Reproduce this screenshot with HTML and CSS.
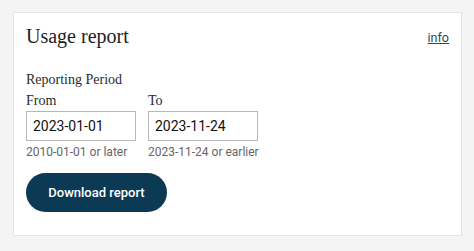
FILE: index.html
```html
<!DOCTYPE html>
<html lang="en">
<head>
  <meta charset="UTF-8" />
  <meta name="viewport" content="width=device-width, initial-scale=1.0"/>
  <title>Usage report</title>
  <link rel="stylesheet" href="styles.css">
</head>
<body>
  <div class="card">
    <div class="card-head">
      <h2 class="title">Usage report</h2>
      <a class="info" href="#">info</a>
    </div>

    <div class="period">Reporting Period</div>
    <div class="fields">
      <div class="field">
        <label class="label" for="from">From</label>
        <input id="from" class="date" type="text" value="2023-01-01">
        <div class="hint">2010-01-01 or later</div>
      </div>
      <div class="field">
        <label class="label" for="to">To</label>
        <input id="to" class="date" type="text" value="2023-11-24">
        <div class="hint">2023-11-24 or earlier</div>
      </div>
    </div>

    <button class="btn">Download report</button>
  </div>
</body>
</html>
```

FILE: styles.css
```css
* {
  box-sizing: border-box;
}

body {
  margin: 0;
  height: 251px;
  padding: 12px 12px 15px 13px;
  background: #f4f4f4;
  font-family: Roboto, 'Open Sans', sans-serif;
  color: #222;
}

.card {
  height: 224px;
  background: #fff;
  border: 1px solid #e4e4e4;
  padding: 11px 12px 0 12px;
}

.card-head {
  display: flex;
  justify-content: space-between;
  align-items: flex-start;
}

.title {
  margin: 0;
  font-family: 'Liberation Serif', serif;
  font-weight: normal;
  font-size: 20px;
  line-height: 24px;
  color: #1e1e1e;
}

.info {
  margin: 6px 0 0 0;
  font-size: 12.5px;
  color: #1d4a6e;
  text-decoration: underline;
}

.period {
  margin-top: 22px;
  font-family: 'Liberation Serif', serif;
  font-size: 14px;
  line-height: 20px;
  color: #2a2a2a;
}

.fields {
  display: flex;
  gap: 12px;
  margin-top: 2px;
}

.field {
  width: 110px;
}

.label {
  display: block;
  font-family: 'Liberation Serif', serif;
  font-size: 14px;
  line-height: 18px;
  color: #2a2a2a;
}

.date {
  display: block;
  width: 110px;
  height: 30px;
  margin-top: 1px;
  padding: 0 6px;
  border: 1px solid #b8b8b8;
  font-family: Roboto, sans-serif;
  font-size: 14px;
  color: #111;
}

.hint {
  margin-top: 3px;
  font-size: 12px;
  line-height: 16px;
  color: #666;
  white-space: nowrap;
}

.btn {
  margin-top: 13px;
  width: 141px;
  height: 39px;
  border: none;
  border-radius: 20px;
  background: #0c3a54;
  color: #fff;
  font-family: Roboto, sans-serif;
  font-weight: 500;
  font-size: 13px;
  cursor: pointer;
}
```
